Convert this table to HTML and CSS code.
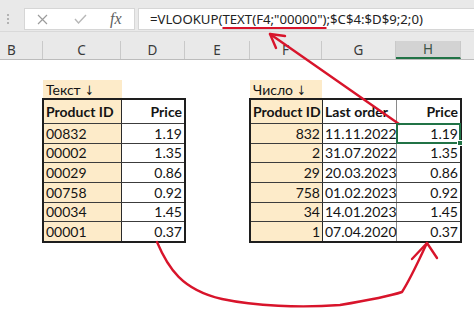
FILE: index.html
```html
<!DOCTYPE html>
<html lang="ru">
<head>
<meta charset="utf-8">
<link rel="stylesheet" href="styles.css">
</head>
<body>
<div class="page">
  <div class="fbar">
    <svg class="grip" width="4" height="12" viewBox="0 0 4 12"><circle cx="2" cy="2" r="1" fill="#a0a0a0"/><circle cx="2" cy="6" r="1" fill="#a0a0a0"/><circle cx="2" cy="10" r="1" fill="#a0a0a0"/></svg>
    <div class="fbox-left">
      <svg class="ico-x" width="11" height="11" viewBox="0 0 11 11"><path d="M1 1L10 10M10 1L1 10" stroke="#9c9c9c" stroke-width="1.2" fill="none"/></svg>
      <svg class="ico-ok" width="13" height="10" viewBox="0 0 13 10"><path d="M1 5L4.5 9L12 1" stroke="#b8b8b8" stroke-width="1.4" fill="none"/></svg>
      <span class="fx">fx</span>
    </div>
    <div class="fbox"><span class="ftext">=VLOOKUP(<span class="mark">TEXT(F4;"00000")</span>;$C$4:$D$9;2;0)</span></div>
  </div>
  <div class="colhead">
    <div class="ch ch-b">B</div>
    <div class="ch ch-c">C</div>
    <div class="ch ch-d">D</div>
    <div class="ch ch-e">E</div>
    <div class="ch ch-f">F</div>
    <div class="ch ch-g">G</div>
    <div class="ch ch-h sel">H</div>
    <div class="ch ch-i"></div>
  </div>
  <div class="sheet">
    <div class="block block-left">
      <div class="label lbl-left">Текст <span class="arr">↓</span></div>
      <div class="tbl tbl-left">
        <div class="row head"><div class="c y">Product ID</div><div class="c r">Price</div></div>
        <div class="row"><div class="c y">00832</div><div class="c r">1.19</div></div>
        <div class="row"><div class="c y">00002</div><div class="c r">1.35</div></div>
        <div class="row"><div class="c y">00029</div><div class="c r">0.86</div></div>
        <div class="row"><div class="c y">00758</div><div class="c r">0.92</div></div>
        <div class="row"><div class="c y">00034</div><div class="c r">1.45</div></div>
        <div class="row last"><div class="c y">00001</div><div class="c r">0.37</div></div>
      </div>
    </div>
    <div class="block block-right">
      <div class="label lbl-right">Число <span class="arr">↓</span></div>
      <div class="tbl tbl-right">
        <div class="row head"><div class="c y">Product ID</div><div class="c">Last order</div><div class="c r">Price</div></div>
        <div class="row"><div class="c y r">832</div><div class="c">11.11.2022</div><div class="c r active">1.19</div></div>
        <div class="row"><div class="c y r">2</div><div class="c">31.07.2022</div><div class="c r">1.35</div></div>
        <div class="row"><div class="c y r">29</div><div class="c">20.03.2023</div><div class="c r">0.86</div></div>
        <div class="row"><div class="c y r">758</div><div class="c">01.02.2023</div><div class="c r">0.92</div></div>
        <div class="row"><div class="c y r">34</div><div class="c">14.01.2023</div><div class="c r">1.45</div></div>
        <div class="row last"><div class="c y r">1</div><div class="c">07.04.2020</div><div class="c r">0.37</div></div>
      </div>
    </div>
  </div>
  <svg class="arrows" width="474" height="326" viewBox="0 0 474 326">
    <g stroke="#d8142b" stroke-width="2.4" fill="none" stroke-linecap="round" stroke-linejoin="round">
      <path d="M399 124L270 34"/>
      <path d="M285 36L270 34L276 48"/>
      <path d="M157 242C168 268 182 290 222 299C255 306 300 308 340 305C370 300 390 296 402 292C410 280 420 258 427 243"/>
      <path d="M412 259L427 243L437 258"/>
    </g>
  </svg>
</div>
</body>
</html>
```
FILE: styles.css
```css
html, body {
  margin: 0;
  padding: 0;
  background: #ffffff;
}
.page {
  position: relative;
  width: 474px;
  height: 326px;
  overflow: hidden;
  background: #ffffff;
  font-family: Lato, "Noto Sans", sans-serif;
  color: #141414;
}
.fbar {
  height: 31px;
  box-sizing: border-box;
  padding-top: 8px;
  background: #e9e9e9;
  display: flex;
  align-items: flex-start;
}
.grip {
  margin: 5px 0 0 6px;
  flex: none;
}
.fbox-left {
  margin-left: 14px;
  width: 111px;
  height: 22px;
  box-sizing: border-box;
  background: #ffffff;
  border: 1px solid #d6d6d6;
  display: flex;
  align-items: center;
  flex: none;
}
.ico-x { margin-left: 12px; }
.ico-ok { margin-left: 26px; }
.fx {
  margin-left: 23px;
  font-family: "Liberation Serif", serif;
  font-style: italic;
  font-size: 16px;
  color: #606060;
}
.fbox {
  margin-left: 3px;
  flex: 1;
  height: 22px;
  box-sizing: border-box;
  background: #ffffff;
  border: 1px solid #d6d6d6;
  border-right: none;
  display: flex;
  align-items: center;
  padding-left: 11px;
  white-space: nowrap;
}
.ftext {
  font-family: "Noto Sans", sans-serif;
  font-size: 13.2px;
  color: #222;
}
.mark {
  text-decoration: underline;
  text-decoration-color: #d8142b;
  text-decoration-thickness: 2px;
  text-underline-offset: 3px;
}
.colhead {
  height: 29px;
  box-sizing: border-box;
  background: #e9e9e9;
  border-top: 1px solid #d9d9d9;
  border-bottom: 1px solid #bcbcbc;
  display: flex;
  align-items: flex-end;
}
.ch {
  height: 18px;
  box-sizing: border-box;
  border-right: 1px solid #c9c9c9;
  font-family: "Noto Sans", sans-serif;
  font-size: 13.5px;
  color: #3a3a3a;
  display: flex;
  align-items: center;
  justify-content: center;
  flex: none;
}
.ch-b { width: 43px; justify-content: flex-start; padding-left: 7px; }
.ch-c { width: 78px; }
.ch-d { width: 64px; }
.ch-e { width: 65px; }
.ch-f { width: 72px; }
.ch-g { width: 74px; }
.ch-h { width: 65px; }
.ch-i { flex: 1; border-right: none; }
.ch.sel {
  background: #d3d3d3;
  border-bottom: 2px solid #217346;
  color: #3d5446;
}
.sheet {
  display: flex;
  padding-top: 20px;
  align-items: flex-start;
}
.block {
  display: flex;
  flex-direction: column;
}
.block-left { margin-left: 42px; }
.block-right { margin-left: 63px; }
.label {
  height: 19px;
  background: #fdebc9;
  font-size: 14px;
  display: flex;
  align-items: center;
  padding-left: 3px;
  box-sizing: border-box;
}
.lbl-left { width: 79px; margin-left: 1px; }
.lbl-right { width: 72px; margin-left: 1px; }
.arr {
  font-family: "DejaVu Sans", sans-serif;
  font-size: 13px;
  margin-left: 3px;
  margin-top: 2px;
  transform: scaleX(0.8);
}
.tbl {
  border: 2px solid #1e1e1e;
  margin-top: -1px;
}
.tbl-left { width: 144px; box-sizing: border-box; }
.tbl-right { width: 213px; box-sizing: border-box; }
.row {
  display: grid;
  height: 19.67px;
  box-sizing: border-box;
  border-bottom: 1px solid #3c3c3c;
  font-size: 14px;
}
.row.head {
  height: 24px;
  font-weight: 700;
}
.row.last { border-bottom: none; height: 18.6px; }
.tbl-left .row { grid-template-columns: 78px 1fr; }
.tbl-right .row { grid-template-columns: 72px 74px 1fr; }
.c {
  position: relative;
  display: flex;
  align-items: flex-end;
  padding: 0 2px 1px 2px;
  border-right: 1px solid #2a2a2a;
  white-space: nowrap;
  overflow: visible;
}
.c:last-child { border-right: none; }
.tbl-right .c:nth-child(2) { border-right-color: #8a8a8a; }
.c.y { background: #fdebc9; }
.c.r { justify-content: flex-end; }
.row.head .c { padding-bottom: 3px; }
.c.active {
  outline: 2px solid #217346;
  outline-offset: -1px;
  z-index: 1;
}
.c.active::after {
  content: "";
  position: absolute;
  right: -3px;
  bottom: -3px;
  width: 4px;
  height: 4px;
  background: #217346;
  border: 1px solid #ffffff;
}
.arrows {
  position: absolute;
  left: 0;
  top: 0;
  pointer-events: none;
}
```
